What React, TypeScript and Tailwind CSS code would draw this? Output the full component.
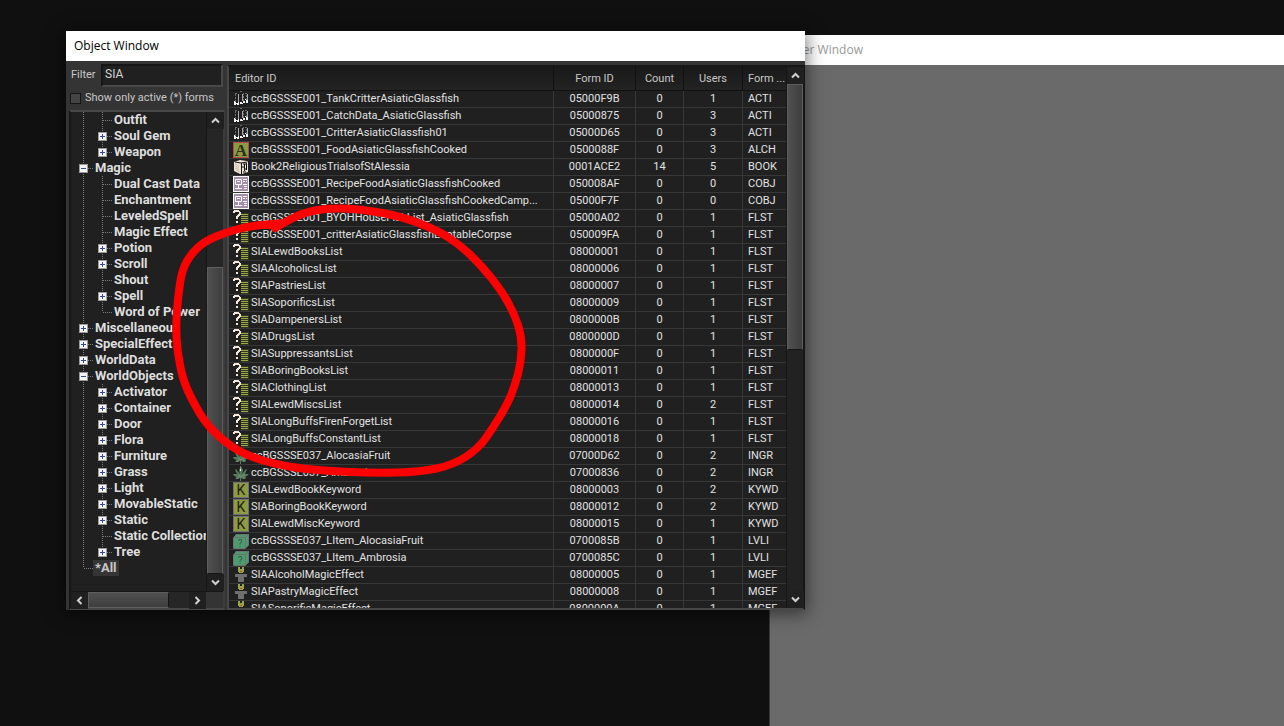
import { useState } from 'react'
import type { ReactNode } from 'react'

type FormType =
  | 'ACTI'
  | 'ALCH'
  | 'BOOK'
  | 'COBJ'
  | 'FLST'
  | 'INGR'
  | 'KYWD'
  | 'LVLI'
  | 'MGEF'

type FormRecord = {
  editorId: string
  formId: string
  count: number
  users: number
  type: FormType
}

type TreeNode = {
  label: string
  level: 1 | 2
  state?: 'open' | 'closed'
  last?: boolean
}

const record = (
  editorId: string,
  formId: string,
  count: number,
  users: number,
  type: FormType,
): FormRecord => ({ editorId, formId, count, users, type })

const records: FormRecord[] = [
  record('ccBGSSSE001_TankCritterAsiaticGlassfish', '05000F9B', 0, 1, 'ACTI'),
  record('ccBGSSSE001_CatchData_AsiaticGlassfish', '05000875', 0, 3, 'ACTI'),
  record('ccBGSSSE001_CritterAsiaticGlassfish01', '05000D65', 0, 3, 'ACTI'),
  record('ccBGSSSE001_FoodAsiaticGlassfishCooked', '0500088F', 0, 3, 'ALCH'),
  record('Book2ReligiousTrialsofStAlessia', '0001ACE2', 14, 5, 'BOOK'),
  record('ccBGSSSE001_RecipeFoodAsiaticGlassfishCooked', '050008AF', 0, 0, 'COBJ'),
  record('ccBGSSSE001_RecipeFoodAsiaticGlassfishCookedCamp...', '05000F7F', 0, 0, 'COBJ'),
  record('ccBGSSSE001_BYOHHouseFishList_AsiaticGlassfish', '05000A02', 0, 1, 'FLST'),
  record('ccBGSSSE001_critterAsiaticGlassfishLootableCorpse', '050009FA', 0, 1, 'FLST'),
  record('SIALewdBooksList', '08000001', 0, 1, 'FLST'),
  record('SIAAlcoholicsList', '08000006', 0, 1, 'FLST'),
  record('SIAPastriesList', '08000007', 0, 1, 'FLST'),
  record('SIASoporificsList', '08000009', 0, 1, 'FLST'),
  record('SIADampenersList', '0800000B', 0, 1, 'FLST'),
  record('SIADrugsList', '0800000D', 0, 1, 'FLST'),
  record('SIASuppressantsList', '0800000F', 0, 1, 'FLST'),
  record('SIABoringBooksList', '08000011', 0, 1, 'FLST'),
  record('SIAClothingList', '08000013', 0, 1, 'FLST'),
  record('SIALewdMiscsList', '08000014', 0, 2, 'FLST'),
  record('SIALongBuffsFirenForgetList', '08000016', 0, 1, 'FLST'),
  record('SIALongBuffsConstantList', '08000018', 0, 1, 'FLST'),
  record('ccBGSSSE037_AlocasiaFruit', '07000D62', 0, 2, 'INGR'),
  record('ccBGSSSE037_Ambrosia', '07000836', 0, 2, 'INGR'),
  record('SIALewdBookKeyword', '08000003', 0, 2, 'KYWD'),
  record('SIABoringBookKeyword', '08000012', 0, 2, 'KYWD'),
  record('SIALewdMiscKeyword', '08000015', 0, 1, 'KYWD'),
  record('ccBGSSSE037_LItem_AlocasiaFruit', '0700085B', 0, 1, 'LVLI'),
  record('ccBGSSSE037_LItem_Ambrosia', '0700085C', 0, 1, 'LVLI'),
  record('SIAAlcoholMagicEffect', '08000005', 0, 1, 'MGEF'),
  record('SIAPastryMagicEffect', '08000008', 0, 1, 'MGEF'),
  record('SIASoporificMagicEffect', '0800000A', 0, 1, 'MGEF'),
]

const treeNodes: TreeNode[] = [
  { label: 'Outfit', level: 2 },
  { label: 'Soul Gem', level: 2, state: 'closed' },
  { label: 'Weapon', level: 2, state: 'closed', last: true },
  { label: 'Magic', level: 1, state: 'open' },
  { label: 'Dual Cast Data', level: 2 },
  { label: 'Enchantment', level: 2 },
  { label: 'LeveledSpell', level: 2 },
  { label: 'Magic Effect', level: 2 },
  { label: 'Potion', level: 2, state: 'closed' },
  { label: 'Scroll', level: 2, state: 'closed' },
  { label: 'Shout', level: 2 },
  { label: 'Spell', level: 2, state: 'closed' },
  { label: 'Word of Power', level: 2, last: true },
  { label: 'Miscellaneous', level: 1, state: 'closed' },
  { label: 'SpecialEffect', level: 1, state: 'closed' },
  { label: 'WorldData', level: 1, state: 'closed' },
  { label: 'WorldObjects', level: 1, state: 'open' },
  { label: 'Activator', level: 2, state: 'closed' },
  { label: 'Container', level: 2, state: 'closed' },
  { label: 'Door', level: 2, state: 'closed' },
  { label: 'Flora', level: 2, state: 'closed' },
  { label: 'Furniture', level: 2, state: 'closed' },
  { label: 'Grass', level: 2, state: 'closed' },
  { label: 'Light', level: 2, state: 'closed' },
  { label: 'MovableStatic', level: 2, state: 'closed' },
  { label: 'Static', level: 2, state: 'closed' },
  { label: 'Static Collection', level: 2 },
  { label: 'Tree', level: 2, state: 'closed', last: true },
  { label: '*All', level: 1, last: true },
]

const iconArt: Record<FormType, ReactNode> = {
  ACTI: (
    <>
      <path
        d="M2.500 3V11M2 2.500H5M7 .5H10M10.500 2V11M12 2.500H15M13.500 4V11"
        stroke="#6a6a6a"
        strokeDasharray="2 1"
      />
      <path d="M5.500 3V11M9.500 3V10M14.500 3V10" stroke="#a8a8a8" />
      <path
        d="M1 10H2V11H3V12H5V11H6V13H3V14H1ZM7 11H9V13H7ZM10 10H12V12H10ZM13 9H15V12H13ZM4 13H6V14H4ZM9 12H10V13H9ZM12 8H13V9H12Z"
        fill="#f2f2f2"
      />
    </>
  ),
  ALCH: (
    <>
      <rect x=".5" y=".5" width="15" height="15" fill="#8d9a42" stroke="#b54a4c" />
      <text x="8" y="14" fontSize="17" fontFamily="Liberation Serif, serif" fontWeight="700" textAnchor="middle" fill="#29321c">
        A
      </text>
    </>
  ),
  BOOK: (
    <>
      <path d="M1 3L7 1L14 2L15 3V13L9 15H7L1 12Z" fill="#efe5d6" />
      <path d="M2 3L8 4L14 3M8.500 4V15M11.500 5V12M13.500 4V11" fill="none" stroke="#111" />
      <path d="M10 5H13M10 13H13M9 8H11M12 10H14" stroke="#111" />
      <path d="M2 5L6 7M2 7L6 9M2 9L6 11M3 11L7 13" stroke="#b8aa9b" strokeWidth=".7" />
    </>
  ),
  COBJ: (
    <>
      <rect x=".5" y=".5" width="15" height="15" fill="#a68fae" stroke="#fff" />
      <path
        d="M2.500 3.500H8.500V8.500H2.500ZM4 5.500H7M5.500 9V13M2 12.500H9M10 3.500H14M10 5.500H12M13 5.500H14M10 8.500H14M11 10.500H14M11 12.500H14"
        fill="none"
        stroke="#fff"
      />
    </>
  ),
  FLST: (
    <>
      <path
        d="M1 0H6V1H7V2H8V5H7V6H6V7H5V9H3V6H4V5H5V4H6V2H2V3H0V1H1ZM3 11H5V13H3Z"
        fill="#f3e8db"
      />
      <rect x="8" y="3" width="8" height="13" fill="#33371f" />
      <path
        d="M8 4.500H15M8 6.500H15M8 8.500H15M8 10.500H15M8 12.500H15M8 14.500H15"
        stroke="#9aa648"
      />
    </>
  ),
  INGR: (
    <>
      <path
        d="M8 1L10 5L9 9L13 4H14L12 9H16L14 11L11 12L13 14H10L8 13V16H7V13L4 14H2L4 12L1 11L0 9H4L2 5L3 4L7 9L6 5Z"
        fill="#55795a"
      />
      <path d="M7.500 1V4M5 10L8 12L12 9M3 13H6M10 13L13 12" fill="none" stroke="#8aa487" strokeWidth=".7" />
      <path d="M7.500 4V6" stroke="#eee" />
    </>
  ),
  KYWD: (
    <>
      <rect x=".5" y=".5" width="15" height="15" fill="#8f9a45" stroke="#6e6e6e" />
      <text x="8" y="13" fontSize="14" fontFamily="Roboto, sans-serif" textAnchor="middle" fill="#1c1f10">
        K
      </text>
    </>
  ),
  LVLI: (
    <>
      <path d="M3 1H16V12L13 15H1V4Z" fill="#4f9a70" />
      <path d="M.5 4.500H12.500V15.500H.5ZM1 4L4 1.500H15.500L12.500 4.500M15.500 2V12L12.500 15" fill="none" stroke="#6b756f" />
      <text x="7" y="14" fontSize="10" fontFamily="Roboto, sans-serif" textAnchor="middle" fill="#2f5f45">
        ?
      </text>
    </>
  ),
  MGEF: (
    <>
      <path d="M5 0H7V2H9V0H11V5H10V6H6V5H5Z" fill="#9aa545" />
      <path d="M7 4H9V5H7Z" fill="#b5473f" />
      <path d="M2 7H14V10H11V15H5V10H2Z" fill="#6f6f6f" />
    </>
  ),
}

const FormIcon = ({ type }: { type: FormType }) => (
  <svg width="16" height="16" viewBox="0 0 16 16" className="shrink-0" aria-hidden="true">
    {iconArt[type]}
  </svg>
)

// One 19px wide step of the tree: dotted guides and, where needed, the +/- box
const Guide = ({
  end,
  stub,
  state,
}: {
  end?: boolean
  stub?: boolean
  state?: 'open' | 'closed'
}) => (
  <svg
    width="19"
    height="16"
    viewBox="0 0 19 16"
    shapeRendering="crispEdges"
    className="shrink-0"
    aria-hidden="true"
  >
    <path d={end ? 'M9.500 0V8' : 'M9.500 0V16'} stroke="#7b7b7b" strokeDasharray="1 1" />
    {stub && <path d="M10 8.500H19" stroke="#7b7b7b" strokeDasharray="1 1" />}
    {state && (
      <>
        <rect x="5.500" y="4.500" width="8" height="8" fill="#f4f4f4" stroke="#9a9a9a" />
        <path d={state === 'open' ? 'M7 8.500H12' : 'M7 8.500H12M9.500 6V11'} stroke="#34479c" />
      </>
    )}
  </svg>
)

const TreeRow = ({ node }: { node: TreeNode }) => {
  const guide = <Guide end={node.last} stub state={node.state} />

  return (
    <li className="flex h-4 items-center whitespace-nowrap">
      {node.level === 2 && <Guide />}
      {node.state ? (
        <button type="button" aria-label={`Toggle ${node.label}`} className="shrink-0">
          {guide}
        </button>
      ) : (
        guide
      )}
      <span
        className={
          node.label === '*All'
            ? 'bg-[#353535] px-0.5 text-[13px] leading-4 font-bold text-[#c8c8c8]'
            : 'px-0.5 text-[13px] leading-4 font-bold text-[#dedede]'
        }
      >
        {node.label}
      </span>
    </li>
  )
}

const Chevron = ({ d }: { d: string }) => (
  <svg width="9" height="9" viewBox="0 0 9 9" aria-hidden="true">
    <path d={d} fill="none" stroke="#d0d0d0" strokeWidth="2" />
  </svg>
)

const UP = 'M1 6.500L4.500 3L8 6.500'
const DOWN = 'M1 2.500L4.500 6L8 2.500'
const LEFT = 'M6.500 1L3 4.500L6.500 8'
const RIGHT = 'M2.500 1L6 4.500L2.500 8'

const ScrollButton = ({ label, d }: { label: string; d: string }) => (
  <button
    type="button"
    aria-label={label}
    className="flex h-[17px] w-[17px] shrink-0 items-center justify-center bg-[#202020]"
  >
    <Chevron d={d} />
  </button>
)

const ObjectTree = () => (
  <div className="flex min-h-0 flex-1 flex-col border-2 border-t-[#484848] border-r-[#3c3c3c] border-b-[#484848] border-l-[#161616] bg-[#202020]">
    <div className="flex min-h-0 flex-1">
      <ul className="min-w-0 flex-1 overflow-hidden pl-[3px]">
        {treeNodes.map((node) => (
          <TreeRow key={node.label} node={node} />
        ))}
      </ul>
      <div className="flex w-[17px] shrink-0 flex-col border-l border-[#161616] bg-[#262626]">
        <ScrollButton label="Scroll up" d={UP} />
        <div className="flex-[139]" />
        <div className="flex-[306] border border-[#5e5e5e] border-b-[#161616] bg-linear-to-r from-[#505050] to-[#3e3e3e]" />
        <ScrollButton label="Scroll down" d={DOWN} />
      </div>
    </div>
    <div className="flex h-[17px] shrink-0 border-t border-[#161616] bg-[#262626]">
      <ScrollButton label="Scroll left" d={LEFT} />
      <div className="flex-[80] border border-[#5e5e5e] border-r-[#161616] bg-linear-to-b from-[#505050] to-[#3e3e3e]" />
      <div className="flex-[20]" />
      <ScrollButton label="Scroll right" d={RIGHT} />
      <div className="w-[17px] bg-[#343434]" />
    </div>
  </div>
)

const FilterPanel = () => {
  const [filter, setFilter] = useState('SIA')
  const [activeOnly, setActiveOnly] = useState(false)

  return (
    <div className="flex w-[159px] shrink-0 flex-col pt-[3px] pl-[3px]">
      <div className="flex items-center gap-2 pr-0.5">
        <label htmlFor="filter" className="w-6 pl-0.5 text-[11px] text-[#c8c8c8]">
          Filter
        </label>
        <input
          id="filter"
          value={filter}
          onChange={(e) => setFilter(e.target.value)}
          className="h-[23px] min-w-0 flex-1 border-2 border-[#161616] border-r-[#484848] border-b-[#484848] bg-[#202020] px-0.5 pb-1 text-xs text-[#d4d4d4] outline-none"
        />
      </div>
      <div className="flex h-[23px] items-center gap-1 pl-px">
        <input
          id="active-only"
          type="checkbox"
          checked={activeOnly}
          onChange={(e) => setActiveOnly(e.target.checked)}
          className="h-[11px] w-[11px] shrink-0 appearance-none border border-[#161616] bg-[#454545] checked:bg-[#d0d0d0]"
        />
        <label htmlFor="active-only" className="text-[11px] whitespace-nowrap text-[#c8c8c8]">
          Show only active (*) forms
        </label>
      </div>
      <ObjectTree />
    </div>
  )
}

const headCell =
  'h-6 border-r border-b border-[#111] bg-linear-to-b from-[#191919] to-[#232323] p-0 font-normal whitespace-nowrap text-[#c8c8c8]'
const cell = 'h-[17px] border-r border-b border-[#373737] p-0'

const FormTable = () => (
  <div className="flex min-w-0 flex-1 border-2 border-t-[#161616] border-r-[#161616] border-b-[#484848] border-l-[#484848] bg-[#202020]">
    <div className="min-w-0 flex-1 overflow-hidden">
      <table className="w-full table-fixed border-separate border-spacing-0 text-[11px] leading-4">
        <colgroup>
          <col />
          <col className="w-[82px]" />
          <col className="w-12" />
          <col className="w-[59px]" />
          <col className="w-[43px]" />
        </colgroup>
        <thead>
          <tr>
            <th className={`${headCell} pl-1.5 text-left`}>Editor ID</th>
            <th className={headCell}>Form ID</th>
            <th className={headCell}>Count</th>
            <th className={headCell}>Users</th>
            <th className={`${headCell} border-r-0 pl-[5px] text-left`}>Form ...</th>
          </tr>
        </thead>
        <tbody className="text-[#e2e2e2]">
          {records.map((r) => (
            <tr key={r.editorId}>
              <td className={cell}>
                <div className="flex h-4 items-center gap-0.5 overflow-hidden pl-1 whitespace-nowrap">
                  <FormIcon type={r.type} />
                  {r.editorId}
                </div>
              </td>
              <td className={`${cell} text-center`}>{r.formId}</td>
              <td className={`${cell} text-center`}>{r.count}</td>
              <td className={`${cell} text-center`}>{r.users}</td>
              <td className={`${cell} border-r-0 pl-[5px]`}>{r.type}</td>
            </tr>
          ))}
        </tbody>
      </table>
    </div>
    <div className="flex w-[17px] shrink-0 flex-col border-l border-[#161616] bg-[#222]">
      <ScrollButton label="Scroll up" d={UP} />
      <div className="flex-[266] border border-[#5e5e5e] border-b-[#161616] bg-linear-to-r from-[#505050] to-[#3e3e3e]" />
      <div className="flex-[243]" />
      <ScrollButton label="Scroll down" d={DOWN} />
    </div>
  </div>
)

const ObjectWindow = () => (
  <section className="absolute top-[31px] left-[66px] flex h-[579px] w-[739px] flex-col bg-[#343434] shadow-[0_2px_16px_2px_rgba(0,0,0,0.5)]">
    <h1 className="h-[30px] shrink-0 bg-white px-2 font-['Open_Sans',sans-serif] text-xs leading-[30px] text-black">
      Object Window
    </h1>
    <div className="flex min-h-0 flex-1 gap-0.5">
      <FilterPanel />
      <div className="flex min-w-0 flex-1 pt-1">
        <FormTable />
      </div>
    </div>
  </section>
)

const RenderWindow = () => (
  <section className="absolute top-[35px] right-0 bottom-0 left-[769px] flex flex-col border-l border-[#3a3a3a] bg-[#6a6a6a]">
    <h2 className="h-[30px] bg-white px-1 font-['Open_Sans',sans-serif] text-xs leading-[30px] text-[#999]">
      Render Window
    </h2>
  </section>
)

const strokePoints = [
  [275, 228], [285, 222], [303, 213], [327, 208], [360, 209], [400, 216],
  [437, 230], [460, 245], [481, 265], [501, 290], [514, 313], [522, 337],
  [521, 363], [515, 385], [508, 403], [493, 428], [478, 449], [453, 465],
  [420, 472], [373, 473], [327, 471], [287, 467], [250, 457], [227, 444],
  [206, 424], [192, 400], [183, 380], [177, 350], [176, 323], [178, 297],
  [182, 270], [191, 254], [205, 241], [227, 232], [250, 226], [273, 224],
  [284, 223],
]

// Joins the midpoints of the freehand points with quadratic curves
const strokePath = strokePoints.reduce((d, [x, y], i) => {
  const next = strokePoints[i + 1]
  if (i === 0) return `M${x} ${y}`
  if (!next) return `${d}L${x} ${y}`
  return `${d}Q${x} ${y} ${(x + next[0]) / 2} ${(y + next[1]) / 2}`
}, '')

const Annotation = () => (
  <svg
    className="pointer-events-none absolute top-[200px] left-[170px]"
    width="360"
    height="280"
    viewBox="170 200 360 280"
    aria-hidden="true"
  >
    <path
      d={strokePath}
      fill="none"
      stroke="#ff0000"
      strokeWidth="8"
      strokeLinecap="round"
      strokeLinejoin="round"
    />
  </svg>
)

export default function App() {
  return (
    <main className="relative h-screen w-full overflow-hidden bg-[#101010] font-[Roboto,'Liberation_Sans',sans-serif]">
      <RenderWindow />
      <ObjectWindow />
      <Annotation />
    </main>
  )
}
